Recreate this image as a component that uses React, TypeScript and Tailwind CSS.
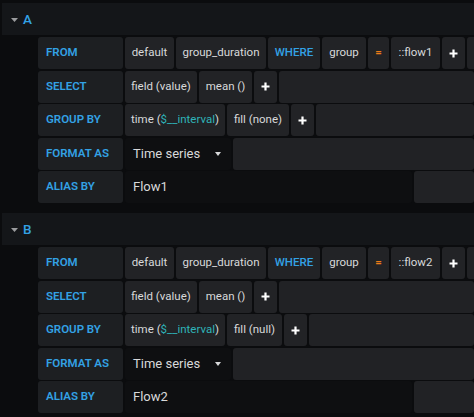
import React from "react";

type Item = {
  text: React.ReactNode;
  w: number;
  kind?: "plain" | "keyword" | "op" | "plus";
};

// fixed widths keep the boxes at the same place as in the editor
const widthClass: Record<number, string> = {
  49: "w-[49px]",
  90: "w-[90px]",
  52: "w-[52px]",
  44: "w-[44px]",
  21: "w-[21px]",
  23: "w-[23px]",
  72: "w-[72px]",
  53: "w-[53px]",
  100: "w-[100px]",
  62: "w-[62px]",
  55: "w-[55px]",
};

function Plus() {
  return (
    <svg width="9" height="9" viewBox="0 0 9 9">
      <path d="M4.5 0.5v8M0.5 4.5h8" stroke="#ffffff" strokeWidth="2.2" />
    </svg>
  );
}

function Box({ item }: { item: Item }) {
  const color =
    item.kind === "keyword"
      ? "text-[#33a2e5] font-medium"
      : item.kind === "op"
        ? "text-[#eb7b18] font-bold"
        : "text-[#d8d9da]";
  return (
    <div
      className={`${widthClass[item.w]} flex shrink-0 items-center justify-center rounded-[3px] bg-[#222326] text-[11.5px] ${color}`}
    >
      {item.kind === "plus" ? <Plus /> : item.text}
    </div>
  );
}

function Label({ children }: { children: React.ReactNode }) {
  return (
    <div className="flex w-[85px] shrink-0 items-center rounded-[3px] bg-[#1d1f22] pl-2 text-[11.5px] font-semibold text-[#33a2e5]">
      {children}
    </div>
  );
}

function Filler() {
  return <div className="min-w-[40px] flex-1 rounded-[3px] bg-[#212225]" />;
}

function Row({ label, children }: { label: string; children: React.ReactNode }) {
  return (
    <div className="flex h-8 gap-[2px]">
      <Label>{label}</Label>
      {children}
    </div>
  );
}

function Query({ name, flow, fill }: { name: string; flow: string; fill: string }) {
  const from: Item[] = [
    { text: "default", w: 49 },
    { text: "group_duration", w: 90 },
    { text: "WHERE", w: 52, kind: "keyword" },
    { text: "group", w: 44 },
    { text: "=", w: 21, kind: "op" },
    { text: flow, w: 49 },
    { text: "+", w: 23, kind: "plus" },
  ];
  const select: Item[] = [
    { text: "field (value)", w: 72 },
    { text: "mean ()", w: 53 },
    { text: "+", w: 23, kind: "plus" },
  ];
  const groupBy: Item[] = [
    {
      text: (
        <span>
          time (<span className="text-[#2fb3b8]">$__interval</span>)
        </span>
      ),
      w: 100,
    },
    { text: fill, w: fill === "fill (none)" ? 62 : 55 },
    { text: "+", w: 23, kind: "plus" },
  ];

  return (
    <div className="mb-[10px]">
      {/* query header */}
      <div className="ml-[2px] flex h-8 items-center gap-[5px] bg-[#141619] pl-[9px]">
        <svg width="7" height="4" viewBox="0 0 7 4" className="mt-[1px]">
          <path d="M0 0h7L3.5 4z" fill="#9a9b9d" />
        </svg>
        <span className="text-[13.5px] font-medium text-[#33a2e5]">{name}</span>
      </div>

      <div className="ml-[38px] mt-[2px] flex flex-col gap-[1.5px]">
        <Row label="FROM">
          {from.map((it, i) => (
            <Box key={i} item={it} />
          ))}
          <Filler />
        </Row>
        <Row label="SELECT">
          {select.map((it, i) => (
            <Box key={i} item={it} />
          ))}
          <Filler />
        </Row>
        <Row label="GROUP BY">
          {groupBy.map((it, i) => (
            <Box key={i} item={it} />
          ))}
          <Filler />
        </Row>
        <Row label="FORMAT AS">
          <div className="flex w-[106px] shrink-0 items-center justify-between rounded-[3px] bg-[#0e0f11] pl-2 pr-[10px] text-[13px] text-[#d8d9da]">
            <span>Time series</span>
            <svg width="6" height="4" viewBox="0 0 6 4">
              <path d="M0 0h6L3 4z" fill="#d8d9da" />
            </svg>
          </div>
          <Filler />
        </Row>
        <Row label="ALIAS BY">
          <div className="flex w-[287px] shrink-0 items-center rounded-[3px] bg-[#0e0f11] pl-2 text-[13px] text-[#d8d9da]">
            {name === "A" ? "Flow1" : "Flow2"}
          </div>
          <Filler />
        </Row>
      </div>
    </div>
  );
}

export default function App(): React.ReactElement {
  return (
    <div className="h-[417px] w-[474px] overflow-hidden bg-[#0b0c0e] pt-[3px] font-['Roboto',sans-serif]">
      <Query name="A" flow="::flow1" fill="fill (none)" />
      <Query name="B" flow="::flow2" fill="fill (null)" />
    </div>
  );
}
